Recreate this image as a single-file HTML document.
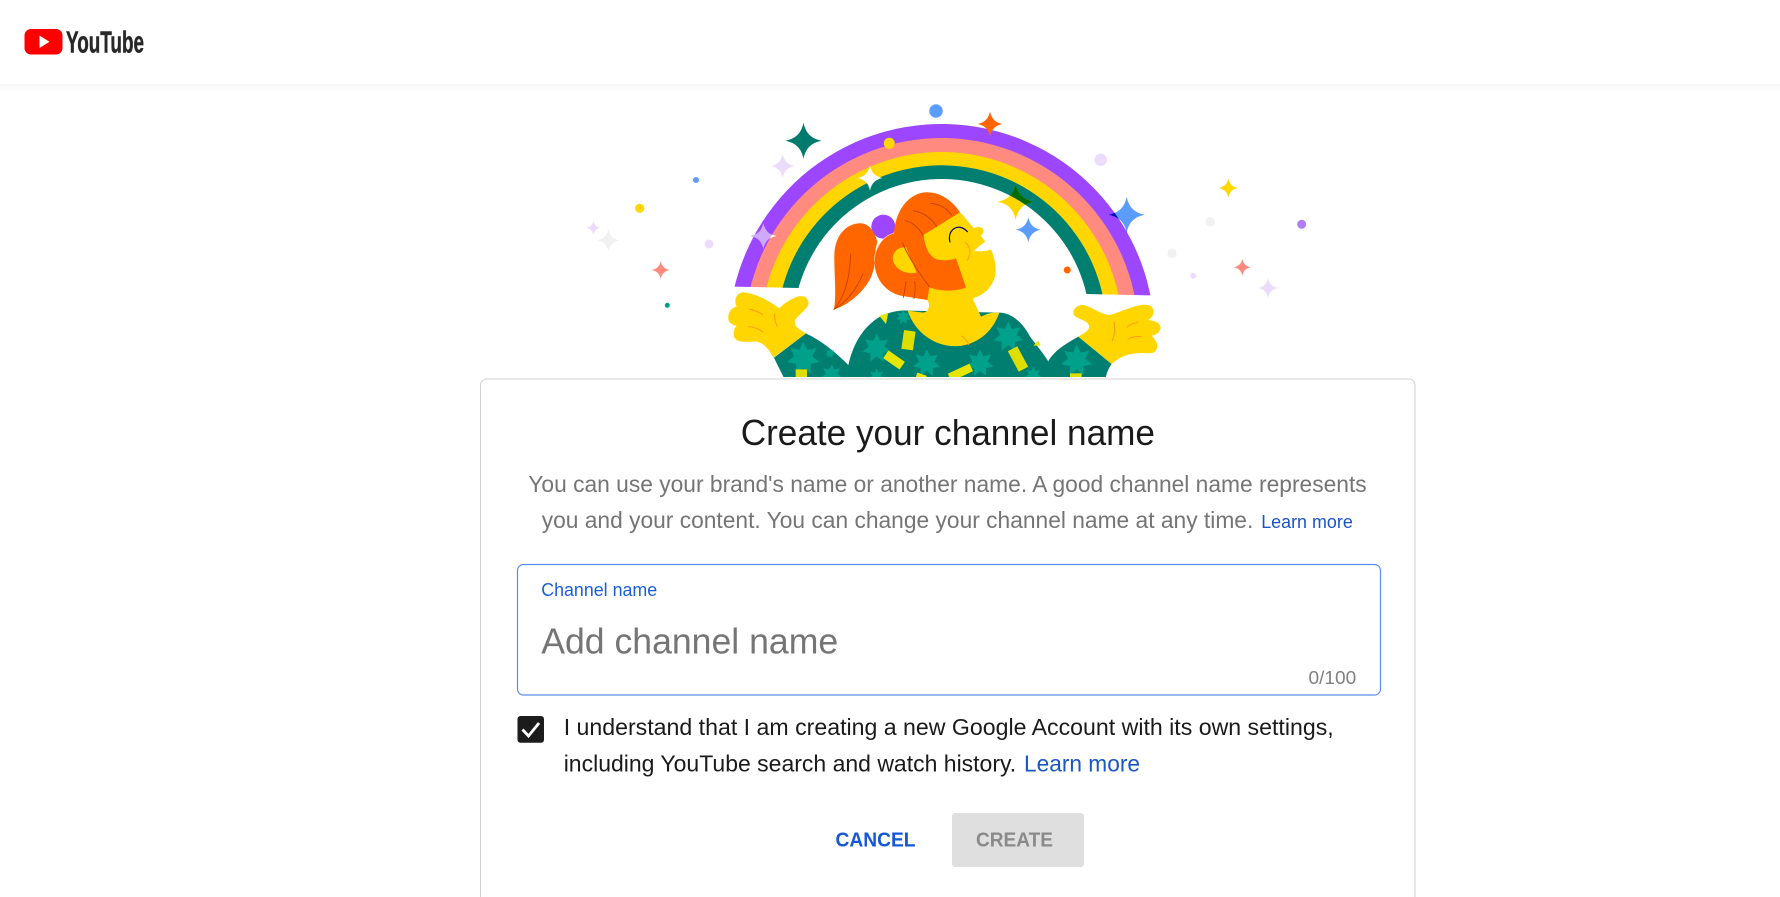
<!DOCTYPE html>
<html lang="en">
<head>
<meta charset="utf-8">
<title>YouTube</title>
<style>
html,body{margin:0;padding:0;width:1780px;height:897px;overflow:hidden;background:#fff}
svg{display:block;position:absolute;left:0;top:0}
text{font-family:"Liberation Sans",Arial,sans-serif}
</style>
</head>
<body>
<svg width="1780" height="897" viewBox="0 0 1780 897" xmlns="http://www.w3.org/2000/svg">
<defs>
<path id="s" d="M0,-1 C.12,-.42 .42,-.12 1,0 C.42,.12 .12,.42 0,1 C-.12,.42 -.42,.12 -1,0 C-.42,-.12 -.12,-.42 0,-1Z"/>
<polygon id="p" points="0,-1 .24,-.5 .78,-.62 .54,-.12 .97,.22 .43,.34 .43,.9 0,.55 -.43,.9 -.43,.34 -.97,.22 -.54,-.12 -.78,-.62 -.24,-.5"/>
<filter id="sh" x="-5%" y="-100%" width="110%" height="300%"><feGaussianBlur stdDeviation="4"/></filter>
<clipPath id="ill"><rect x="560" y="90" width="800" height="287"/></clipPath>
<clipPath id="inOuter"><circle cx="942.5" cy="337" r="213" transform="rotate(1.2 942.5 291)"/></clipPath>
<clipPath id="inPink"><circle cx="942.5" cy="335" r="197" transform="rotate(1.2 942.5 291)"/></clipPath>
<clipPath id="tealRing"><path clip-rule="evenodd" transform="rotate(1.2 942.5 291)" d="M777.8,330a164.7,164.7 0 1,0 329.4,0a164.7,164.7 0 1,0 -329.4,0ZM793.9,327.6a148.6,148.6 0 1,0 297.2,0a148.6,148.6 0 1,0 -297.2,0Z"/></clipPath>
</defs>

<!-- header -->
<rect x="-20" y="81" width="1820" height="6" fill="#000" opacity=".05" filter="url(#sh)"/>
<rect x="0" y="0" width="1780" height="84" fill="#fff"/>
<rect x="24.5" y="29" width="38" height="25.5" rx="6.5" fill="#ff0000"/>
<polygon points="39.5,35.5 49.5,41.8 39.5,48" fill="#fff"/>
<text x="66" y="52.5" font-size="31" font-weight="bold" fill="#282828" stroke="#282828" stroke-width=".5" textLength="78" lengthAdjust="spacingAndGlyphs">YouTube</text>

<!-- illustration -->
<g clip-path="url(#ill)">
  <g transform="rotate(1.2 942.5 291)">
    <path d="M729.5,291 A213,213 0 0 1 1155.5,291 L1155.5,291Z" fill="none"/>
    <circle cx="942.5" cy="337" r="213" fill="#9c47ff"/>
    <circle cx="942.5" cy="335" r="197" fill="#ff8a80"/>
    <circle cx="942.5" cy="333" r="181" fill="#ffd600"/>
    <circle cx="942.5" cy="330" r="164.7" fill="#007f70"/>
    <circle cx="942.5" cy="327.6" r="148.6" fill="#fff"/>
    <rect x="700" y="291" width="500" height="120" fill="#fff"/>
  </g>
  <rect x="700" y="360" width="500" height="20" fill="#fff"/>

  <!-- sparkles and dots -->
  <use href="#s" transform="translate(803.5,140.7) scale(18)" fill="#007a6c"/>
  <use href="#s" transform="translate(782.7,166) scale(12)" fill="#ecdcfc"/>
  <use href="#s" transform="translate(870,178) scale(12.5)" fill="#fff"/>
  <use href="#s" transform="translate(763.3,236) scale(13)" fill="#cfa8ff"/>
  <g clip-path="url(#inPink)"><use href="#s" transform="translate(763.3,236) scale(13)" fill="#fff"/></g>
  <use href="#s" transform="translate(593.3,227.7) scale(7)" fill="#ecdcfc"/>
  <use href="#s" transform="translate(608.3,240.3) scale(11)" fill="#f1f1f1"/>
  <use href="#s" transform="translate(660.7,270) scale(9)" fill="#ff8a80"/>
  <circle cx="696" cy="180" r="3" fill="#5b9dff"/>
  <circle cx="639.7" cy="208.3" r="4.6" fill="#ffd600"/>
  <circle cx="709" cy="244" r="4.5" fill="#ecdcfc"/>
  <circle cx="667.3" cy="305.3" r="2.5" fill="#00a08a"/>
  <circle cx="889.3" cy="143.3" r="5.5" fill="#ffd600"/>
  <circle cx="936" cy="111" r="6.7" fill="#5b9dff"/>
  <use href="#s" transform="translate(990,124) scale(12.5)" fill="#ff6600"/>
  <circle cx="1100.7" cy="159.7" r="6.2" fill="#ecdcfc"/>
  <use href="#s" transform="translate(1126.7,214.7) scale(18)" fill="#5b9dff"/>
  <g clip-path="url(#inOuter)"><use href="#s" transform="translate(1126.7,214.7) scale(18)" fill="#0000c0"/></g>
  <use href="#s" transform="translate(1015.7,201.7) scale(18)" fill="#ffd600"/>
  <g clip-path="url(#tealRing)"><use href="#s" transform="translate(1015.7,201.7) scale(18)" fill="#006b00"/></g>
  <use href="#s" transform="translate(1028.3,229.7) scale(12.5)" fill="#5b9dff"/>
  <circle cx="1067.3" cy="270" r="3.5" fill="#ff6600"/>
  <use href="#s" transform="translate(1228.3,188) scale(9.5)" fill="#ffd600"/>
  <circle cx="1210.3" cy="221.7" r="4.7" fill="#f1f1f1"/>
  <circle cx="1301.7" cy="224.3" r="4.5" fill="#b27cf5"/>
  <circle cx="1172" cy="253.3" r="4.7" fill="#f1f1f1"/>
  <circle cx="1193.3" cy="275.7" r="3" fill="#ecdcfc"/>
  <use href="#s" transform="translate(1242.3,267.3) scale(8.5)" fill="#ff8a80"/>
  <use href="#s" transform="translate(1268,288) scale(10)" fill="#ecdcfc"/>

  <!-- left arm -->
  <g transform="translate(720,290) scale(.33333)">
    <path d="M162,203 L258,130 C310,155 350,190 385,225 L400,270 L195,270 C180,240 170,220 162,203Z" fill="#007f70"/>
    <use href="#p" transform="translate(250,205) scale(50)" fill="#00a08a"/>
    <use href="#p" transform="translate(335,255) scale(32)" fill="#00a08a"/>
    <use href="#p" transform="translate(330,190) scale(15)" fill="#00a08a"/>
    <rect x="227" y="238" width="34" height="25" fill="#dede00"/>
    <path d="M160,203 L258,130 C240,120 220,110 225,90 C235,75 265,55 266,40 C265,22 250,15 232,20 C210,28 190,42 178,55 C150,35 110,10 70,7 C50,7 40,30 50,50 C30,55 25,70 25,85 C25,100 40,105 50,108 C42,115 40,125 42,140 C50,160 75,155 110,155 C130,158 150,180 160,203Z" fill="#ffd600"/>
    <g fill="none" stroke="#ff9a1a" stroke-width="3" stroke-linecap="round">
      <path d="M88,57 Q110,62 128,74"/><path d="M86,110 Q110,112 128,125"/><path d="M164,72 Q162,90 172,110"/>
    </g>
  </g>

  <!-- right arm -->
  <g transform="translate(1020,290) scale(.33333)">
    <path d="M175,140 L275,222 C265,235 260,250 255,270 L70,270 L85,213 C105,180 140,160 175,140Z" fill="#007f70"/>
    <use href="#p" transform="translate(170,212) scale(48)" fill="#00a08a"/>
    <use href="#p" transform="translate(60,255) scale(35)" fill="#00a08a"/>
    <rect x="150" y="250" width="35" height="16" fill="#dede00"/>
    <path d="M175,140 L275,222 C300,200 330,185 390,190 C412,190 418,165 405,150 C400,143 398,140 395,137 C410,135 422,125 422,112 C420,98 405,92 385,90 C398,82 402,72 400,60 C395,42 375,42 355,47 C330,52 290,70 270,75 C245,75 215,50 190,45 C170,43 155,60 162,75 C175,90 205,90 208,110 C205,125 190,130 175,140Z" fill="#ffd600"/>
    <g fill="none" stroke="#ff9a1a" stroke-width="3" stroke-linecap="round">
      <path d="M355,96 Q335,100 322,111"/><path d="M364,140 Q340,138 324,147"/><path d="M282,95 Q288,125 277,152"/>
    </g>
  </g>

  <!-- figure -->
  <g transform="translate(820,180) scale(.33333)">
    <path d="M85,555 C100,490 130,440 180,410 C210,395 240,390 263,392 L538,398 C575,398 610,430 630,470 C645,490 670,520 684,543 L700,600 L75,600Z" fill="#007f70"/>
    <use href="#p" transform="translate(170,505) scale(44)" fill="#00a08a"/>
    <use href="#p" transform="translate(320,550) scale(42)" fill="#00a08a"/>
    <use href="#p" transform="translate(480,550) scale(42)" fill="#00a08a"/>
    <use href="#p" transform="translate(565,470) scale(46)" fill="#00a08a"/>
    <use href="#p" transform="translate(640,585) scale(25)" fill="#00a08a"/>
    <use href="#p" transform="translate(170,590) scale(24)" fill="#00a08a"/>
    <use href="#p" transform="translate(250,412) scale(22)" fill="#00a08a"/>
    <polygon points="178,408 205,398 198,432" fill="#e6e600"/>
    <rect x="248" y="452" width="35" height="57" fill="#dede00" transform="rotate(8 265 480)"/>
    <rect x="192" y="526" width="60" height="28" fill="#e6e600" transform="rotate(35 222 540)"/>
    <rect x="578" y="502" width="32" height="70" fill="#dede00" transform="rotate(-28 594 537)"/>
    <rect x="385" y="565" width="72" height="25" fill="#e6e600" transform="rotate(-25 421 577)"/>
    <rect x="288" y="582" width="30" height="20" fill="#e6e600" transform="rotate(20 303 592)"/>
    <polygon points="640,497 655,482 662,497" fill="#e6e600"/>

    <!-- face and neck -->
    <path d="M420,97 C436,112 452,135 462,145 C472,138 492,140 490,155 C488,166 478,165 484,170 L496,185 C485,192 470,205 462,213 C480,216 498,213 513,208 C525,235 530,265 525,290 C515,325 490,345 458,356 L483,410 C505,398 520,397 538,398 C520,450 480,490 420,498 C350,505 285,460 263,392 L310,398 C330,395 330,370 322,360 L300,300 L280,150 L380,80Z" fill="#ffd600"/>

    <!-- scrunchie and ponytail -->
    <circle cx="190" cy="140" r="36" fill="#9c47ff"/>
    <path d="M42,388 C50,340 42,280 43,225 C45,160 85,128 125,130 C150,132 165,160 172,185 C160,230 165,265 160,270 C150,320 90,375 42,388Z" fill="#ff6600"/>
    <g fill="none" stroke="#c84400" stroke-width="3" stroke-linecap="round">
      <path d="M92,222 C90,290 75,350 42,388"/><path d="M128,282 C110,330 75,370 42,388"/>
    </g>

    <!-- hair -->
    <path d="M222,160 C228,75 280,35 325,37 C365,38 400,65 420,97 L310,165 C315,190 320,225 350,238 C370,243 395,240 408,235 L438,322 C410,335 360,335 328,322 L322,360 L248,348 C200,340 165,300 163,245 C163,205 190,165 222,160Z" fill="#ff6600"/>
    <path d="M222,160 C190,165 163,205 163,245" fill="none" stroke="#ffd9bf" stroke-width="2"/>
    <path d="M218,235 C220,210 240,200 258,202 L290,278 C255,285 220,265 218,235Z" fill="#ffd600"/>
    <g fill="none" stroke="#c84400" stroke-width="3" stroke-linecap="round">
      <path d="M333,70 Q375,75 395,105"/><path d="M280,92 Q325,100 350,140"/><path d="M255,122 Q290,130 310,168"/>
      <path d="M247,188 C265,230 290,270 328,320"/><path d="M258,305 Q255,330 250,352"/><path d="M284,305 Q288,330 282,355"/>
    </g>
    <path d="M390,186 C380,150 415,125 442,155" fill="none" stroke="#000080" stroke-width="3.5" stroke-linecap="round"/>
    <path d="M435,187 Q460,205 443,240" fill="none" stroke="#ff9a1a" stroke-width="3" stroke-linecap="round"/>
    <path d="M424,468 Q440,478 446,494" fill="none" stroke="#ff9a1a" stroke-width="3" stroke-linecap="round"/>
  </g>
</g>

<!-- card -->
<path d="M480.5,897 V385 a6,6 0 0 1 6,-6 H1409 a6,6 0 0 1 6,6 V897" fill="#fff" stroke="#d2d2d2" stroke-width="1"/>

<text x="740.7" y="445" font-size="36" fill="#1a1a1a" textLength="414.3" lengthAdjust="spacingAndGlyphs">Create your channel name</text>
<text x="528.3" y="492" font-size="23.5" fill="#757575" textLength="838.4" lengthAdjust="spacingAndGlyphs">You can use your brand's name or another name. A good channel name represents</text>
<text x="541.7" y="528" font-size="23.5" fill="#757575" textLength="711.6" lengthAdjust="spacingAndGlyphs">you and your content. You can change your channel name at any time.</text>
<text x="1261.2" y="528" font-size="18.5" fill="#1c53c7" textLength="91.6" lengthAdjust="spacingAndGlyphs">Learn more</text>

<rect x="517.5" y="564.5" width="863" height="130.5" rx="6" fill="#fff" stroke="#5b8def" stroke-width="1.2"/>
<text x="541.2" y="596" font-size="18.5" fill="#1a5fd8" textLength="116" lengthAdjust="spacingAndGlyphs">Channel name</text>
<text x="541.2" y="653.5" font-size="36" fill="#757575" textLength="297" lengthAdjust="spacingAndGlyphs">Add channel name</text>
<text x="1308.5" y="684" font-size="18" fill="#808080" textLength="47.7" lengthAdjust="spacingAndGlyphs">0/100</text>

<rect x="517.5" y="716" width="26.5" height="26.7" rx="3" fill="#1c1c1c"/>
<path d="M522.5,729.5 L528.5,736 L539,723" fill="none" stroke="#fff" stroke-width="2.8"/>
<text x="563.7" y="735" font-size="23.5" fill="#1a1a1a" textLength="770" lengthAdjust="spacingAndGlyphs">I understand that I am creating a new Google Account with its own settings,</text>
<text x="563.7" y="771.5" font-size="23.5" fill="#1a1a1a" textLength="452.5" lengthAdjust="spacingAndGlyphs">including YouTube search and watch history.</text>
<text x="1024" y="771.5" font-size="23.5" fill="#1a56c4" textLength="116" lengthAdjust="spacingAndGlyphs">Learn more</text>

<text x="835.5" y="846.7" font-size="20.5" font-weight="bold" fill="#1558d6" textLength="80" lengthAdjust="spacingAndGlyphs">CANCEL</text>
<rect x="952" y="813" width="132" height="54" rx="3" fill="#dfdfdf"/>
<text x="976" y="846.7" font-size="20.5" font-weight="bold" fill="#8a8a8a" textLength="77" lengthAdjust="spacingAndGlyphs">CREATE</text>
</svg>
</body>
</html>
